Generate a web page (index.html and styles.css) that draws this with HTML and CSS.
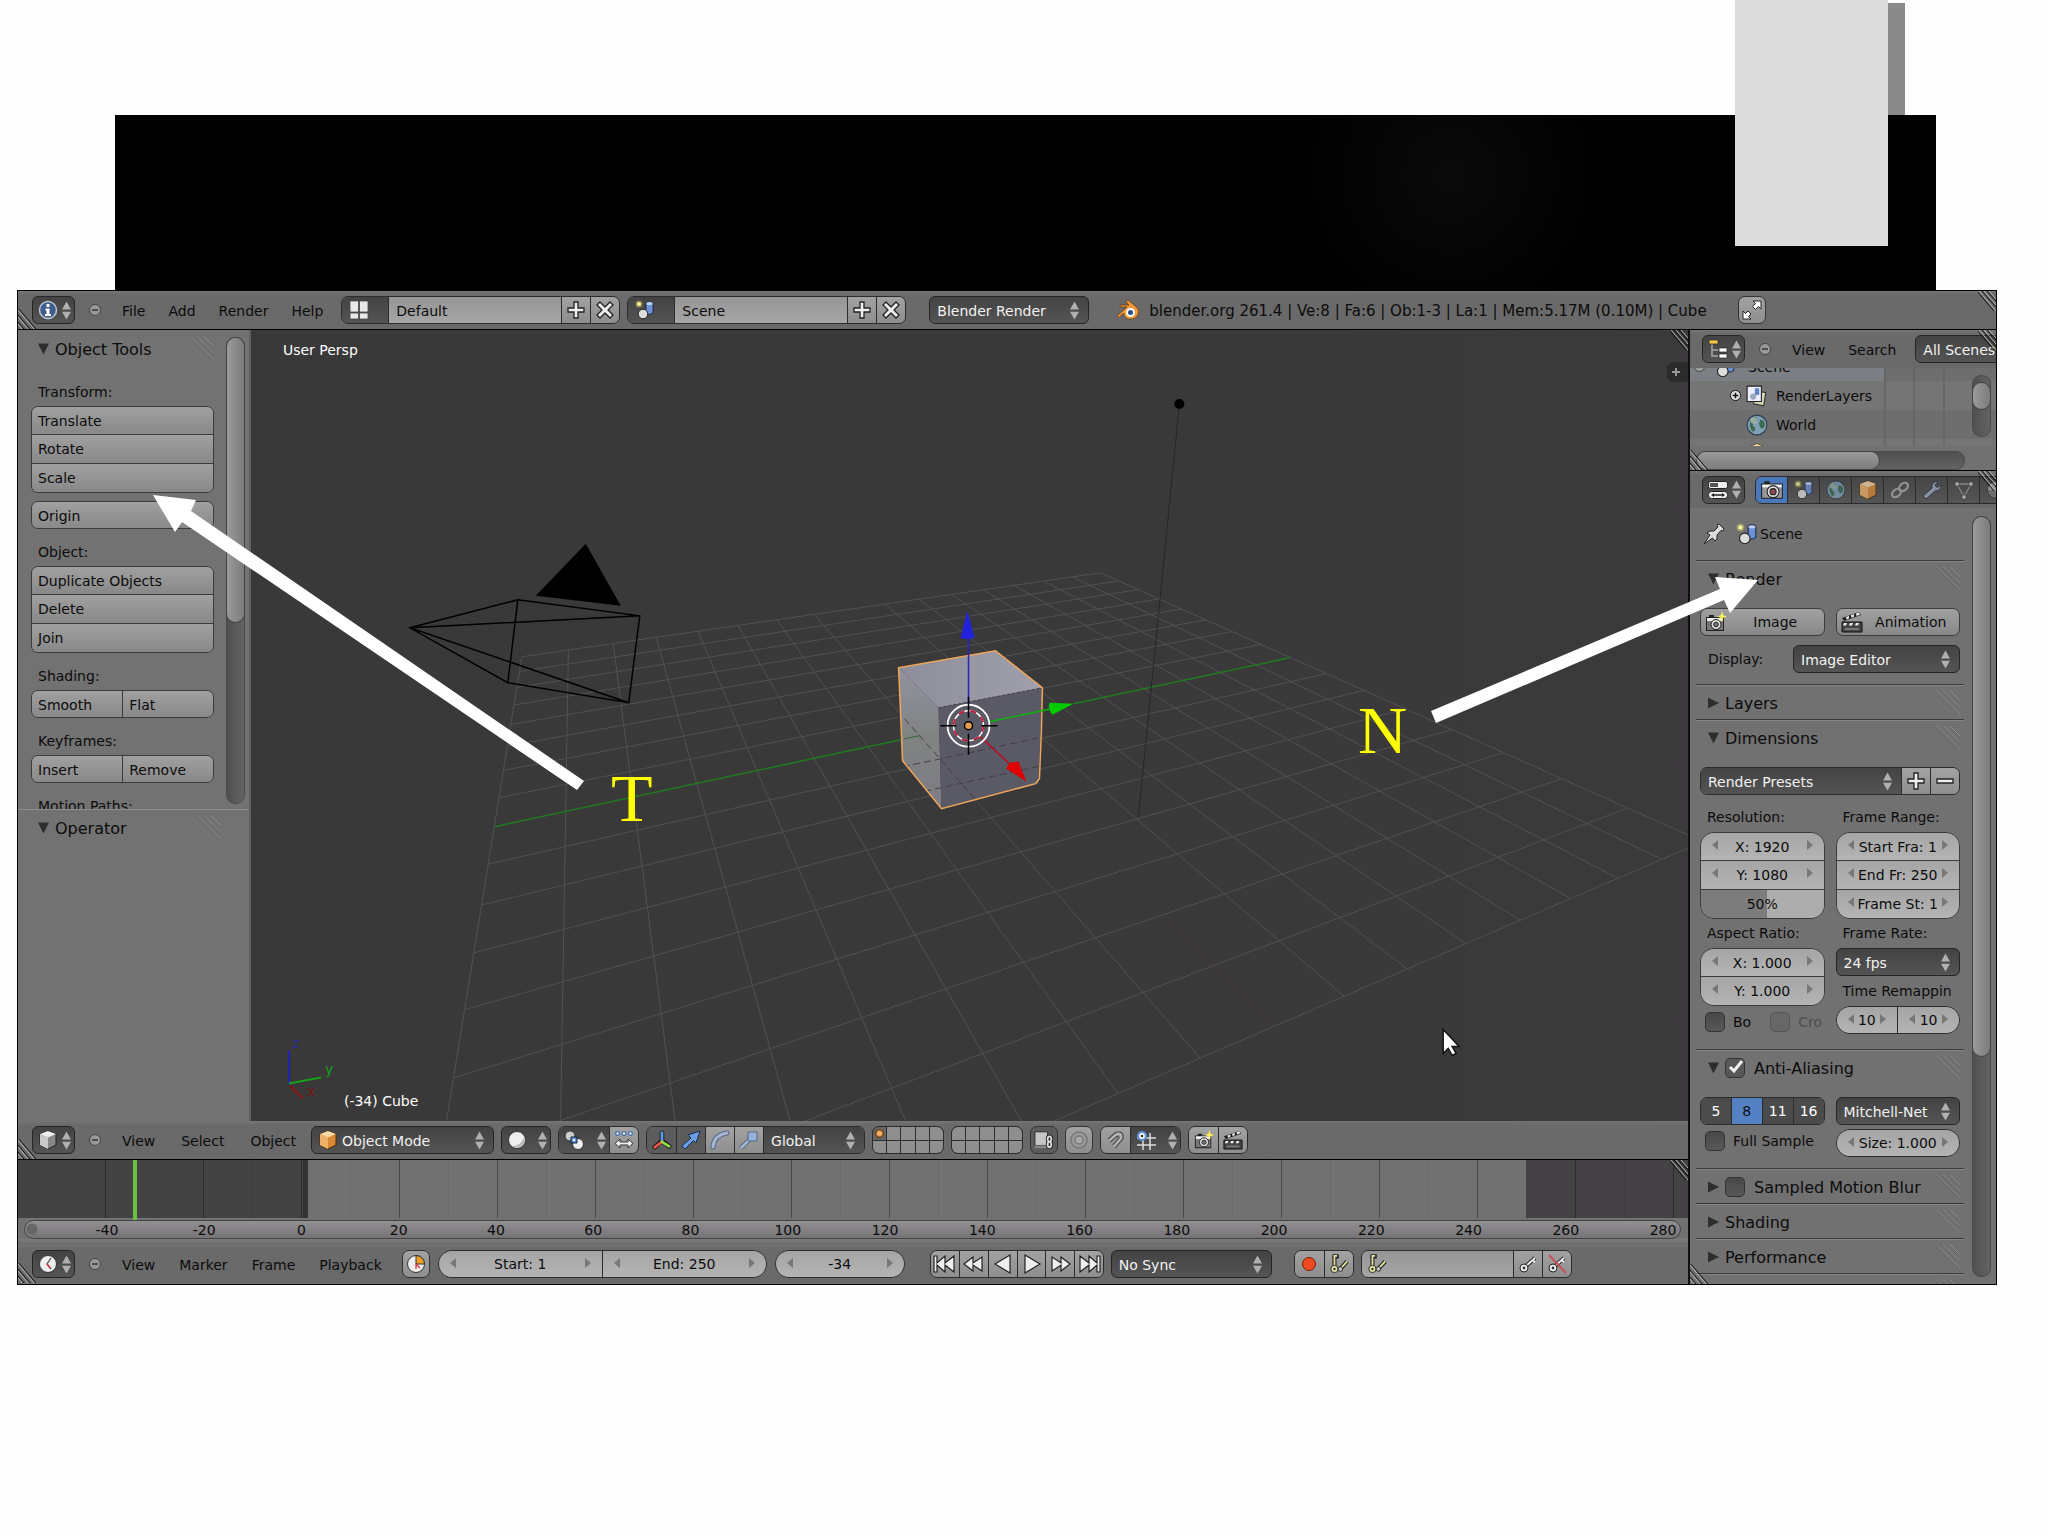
FILE: index.html
```html
<!DOCTYPE html>
<html lang="en">
<head>
    <meta charset="UTF-8">
    <meta name="viewport" content="width=device-width, initial-scale=1.0">
    <title>Blender</title>
    <link rel="stylesheet" href="styles.css">
</head>
<body>

<!-- icon sprite -->
<svg class="sprite" aria-hidden="true">
    <symbol id="updown" viewBox="0 0 10 20"><path d="M0 9L5 0L10 9ZM0 11.500L10 11.500L5 20Z" fill="#b0b0b0"/></symbol>
    <symbol id="minus-dot" viewBox="0 0 14 14"><circle cx="7" cy="7" r="5.500" fill="#999" stroke="#444"/><path d="M4 7H10" stroke="#333" stroke-width="1.500"/></symbol>
    <symbol id="plus" viewBox="0 0 20 20"><path d="M8 2H12V8H18V12H12V18H8V12H2V8H8Z" fill="#eee" stroke="#222" stroke-width="1.300"/></symbol>
    <symbol id="dash" viewBox="0 0 20 20"><path d="M2 8H18V12H2Z" fill="#eee" stroke="#222" stroke-width="1.300"/></symbol>
    <symbol id="cross" viewBox="0 0 20 20"><path d="M5 2L10 7L15 2L18 5L13 10L18 15L15 18L10 13L5 18L2 15L7 10L2 5Z" fill="#eee" stroke="#222" stroke-width="1.300"/></symbol>
    <symbol id="info" viewBox="0 0 20 20"><circle cx="10" cy="10" r="8.500" fill="#3f5d8c" stroke="#b9c4d6" stroke-width="1.500"/><path d="M8.500 4H11.500V7H8.500ZM7.500 8.500H11.500V14H13V16H7V14H8.500V10.500H7.500Z" fill="#fff"/></symbol>
    <symbol id="layout" viewBox="0 0 20 20"><path d="M1 1H9.500V12H1ZM1 13H9.500V19H1ZM10.500 1H19V12H10.500ZM10.500 13H19V19H10.500Z" fill="#e8e8e8" stroke="#444" stroke-width=".8"/></symbol>
    <symbol id="scene" viewBox="0 0 20 20"><path d="M11 3Q14.500 0 18 3V13Q14.500 16 11 13Z" fill="#6a92d4" stroke="#1d2c4a"/><ellipse cx="14.500" cy="3.500" rx="3.200" ry="1.500" fill="#b9d0f2"/><circle cx="8" cy="14" r="4.800" fill="#ddd" stroke="#222"/><circle cx="4" cy="4" r="3.500" fill="#c9c65a" opacity=".5"/><circle cx="4" cy="4" r="2" fill="#f6f3a0"/></symbol>
    <symbol id="blender" viewBox="0 0 24 20"><path d="M1 16L11 7H4V5H13L10 1.500L12 0L21 7.500Q24 11 22 15Q19 19.500 14 19.300Q8 18.500 7.500 13L3 17.500Z" fill="#f09a3c" stroke="#6b3a0c" stroke-width=".8"/><circle cx="14.500" cy="12.500" r="4.500" fill="#fff"/><circle cx="14.500" cy="12.500" r="2.500" fill="#2b4f86"/></symbol>
    <symbol id="expand" viewBox="0 0 20 20"><path d="M11 1H19V9L16.500 6.500L13.500 9.500L10.500 6.500L13.500 3.500ZM1 11L3.500 13.500L6 11L9 14L6.500 16.500L9 19H1Z" fill="#fff" stroke="#222"/></symbol>
    <symbol id="tree" viewBox="0 0 20 20"><path d="M4 5V17H10M4 11H10" fill="none" stroke="#a8a8a8" stroke-width="1.500"/><path d="M1 1H10V5H1Z" fill="#f2c44c" stroke="#222" stroke-width=".7"/><path d="M11 9H19V13H11ZM11 15H19V19H11Z" fill="#fff" stroke="#222" stroke-width=".7"/></symbol>
    <symbol id="props" viewBox="0 0 20 20"><rect x="0.500" y="1.500" width="19" height="7" rx="2" fill="#eee" stroke="#222"/><path d="M2 3H10V7H2Z" fill="#555"/><rect x="0.500" y="11.500" width="19" height="7" rx="3" fill="#eee" stroke="#222"/><path d="M3 15L6 13V17ZM17 15L14 13V17ZM6 14.300H14V15.700H6Z" fill="#222"/></symbol>
    <symbol id="camera" viewBox="0 0 22 20"><path d="M1 4H4V2H9V4H21V18H1Z" fill="#222"/><path d="M2 5H20V8H2Z" fill="#f4f4f4"/><path d="M2 8H20V17H2Z" fill="#999"/><circle cx="12" cy="11.500" r="5.500" fill="#ddd" stroke="#222"/><circle cx="12" cy="11.500" r="2.800" fill="#8a4a58" stroke="#222"/></symbol>
    <symbol id="camera-new" viewBox="0 0 22 22"><path d="M1 6H4V4H9V6H19V20H1Z" fill="#222"/><path d="M2 7H18V10H2Z" fill="#eee"/><path d="M2 10H18V19H2Z" fill="#777"/><circle cx="11" cy="13.500" r="5" fill="#ddd" stroke="#222"/><circle cx="11" cy="13.500" r="2.300" fill="#777" stroke="#222"/><path d="M17 0L18.300 4.200L22 5.500L18.300 6.800L17 11L15.700 6.800L12 5.500L15.700 4.200Z" fill="#f8ee5a"/></symbol>
    <symbol id="clapper" viewBox="0 0 22 22"><path d="M1 11H21V21H1Z" fill="#444" stroke="#111"/><path d="M1 7L18 1L20 4L3 10Z" fill="#222"/><path d="M5 6L8 5L8 7.500L5.500 8.500ZM10 4.200L13 3.200V5.700L10.500 6.700ZM15 2.500L18 1.500L19 3.500L15.500 5ZM3 12H6L5 14.500H2ZM9 12H12L11 14.500H8ZM15 12H18L17 14.500H14Z" fill="#eee"/><path d="M4 17H18V19H4Z" fill="#777"/></symbol>
    <symbol id="globe" viewBox="0 0 20 20"><circle cx="10" cy="10" r="9" fill="#7f9fb5" stroke="#2b3b4b"/><path d="M4 5Q8 1 10 4Q11 7 7 9Q5 10 8 12Q9 16 6 16Q2 12 4 5ZM13 5Q18 6 17 11Q15 15 13 12Q11 9 13 5Z" fill="#3f6a52"/><circle cx="7" cy="6" r="3" fill="#fff" opacity=".45"/></symbol>
    <symbol id="cube-o" viewBox="0 0 20 20"><path d="M10 1L18 4V15L10 19L2 15V4Z" fill="#d98a35" stroke="#4a2b0a"/><path d="M10 1L18 4L10 7.500L2 4Z" fill="#fad9a8"/><path d="M2 4L10 7.500V19L2 15Z" fill="#f0b168"/></symbol>
    <symbol id="cube-w" viewBox="0 0 20 20"><path d="M10 1L18 4V15L10 19L2 15V4Z" fill="#888" stroke="#222"/><path d="M10 1L18 4L10 7.500L2 4Z" fill="#eee"/><path d="M2 4L10 7.500V19L2 15Z" fill="#c9c9c9"/></symbol>
    <symbol id="chain" viewBox="0 0 20 20"><g fill="none" stroke="#aaa" stroke-width="2.200"><ellipse cx="6.500" cy="13" rx="5" ry="3.500" transform="rotate(-40 6.500 13)"/><ellipse cx="13.500" cy="7" rx="5" ry="3.500" transform="rotate(-40 13.500 7)"/></g></symbol>
    <symbol id="wrench" viewBox="0 0 20 20"><path d="M1 16L10 8Q9 3 14 1.500L16 2L13 5L15 7.500L19 5Q19 11 13 11L4 19Z" fill="#9aa8bd" stroke="#2a2f3a"/></symbol>
    <symbol id="mesh" viewBox="0 0 20 20"><path d="M3 4H17L10 17Z" fill="none" stroke="#999" stroke-width="1.300"/><path d="M1 2H5V6H1ZM15 2H19V6H15ZM8 15H12V19H8Z" fill="#ccc" stroke="#333" stroke-width=".7"/></symbol>
    <symbol id="ball" viewBox="0 0 20 20"><circle cx="10" cy="10" r="8.500" fill="#eee" stroke="#333"/><path d="M5 16Q14 16 17 7Q19 14 13 17Q8 18 5 16Z" fill="#bbb"/></symbol>
    <symbol id="material" viewBox="0 0 20 20"><circle cx="10" cy="10" r="8.500" fill="#777" stroke="#333"/><path d="M10 2V10H2Q2 3 10 2ZM10 10H18Q17 18 10 18Z" fill="#aaa"/></symbol>
    <symbol id="pin" viewBox="0 0 22 22"><path d="M1 21L7 12L4 10L7 8L11 8L15 4L14 2L16 1L21 6L20 8L18 7.500L14 12L14 16L12 18L9.500 15Z" fill="#ddd" stroke="#222"/></symbol>
    <symbol id="layers" viewBox="0 0 20 20"><path d="M8 5L18 7L16 19L7 17Z" fill="#d6d6b8" stroke="#333"/><path d="M1 1H14V15H1Z" fill="#eef" stroke="#222"/><path d="M8 3H12V9H8Z" fill="#5b84c8"/><circle cx="6.500" cy="10.500" r="2.800" fill="#9ab"/></symbol>
    <symbol id="pivot" viewBox="0 0 20 20"><circle cx="6" cy="6" r="5" fill="#ccc" stroke="#333"/><circle cx="14" cy="14" r="5.500" fill="#eee" stroke="#333"/><path d="M7 7H13V13H7Z" fill="#5a8fd8" stroke="#123"/><path d="M9 9H11V11H9Z" fill="#fff"/></symbol>
    <symbol id="centers" viewBox="0 0 20 20"><g fill="#fff" stroke="#3d6fae" stroke-width="1.300"><circle cx="3.500" cy="3.500" r="1.800"/><circle cx="10" cy="3.500" r="1.800"/><circle cx="16.500" cy="3.500" r="1.800"/></g><path d="M1 13.500L6 9V12H14V9L19 13.500L14 18V15H6V18Z" fill="#eee" stroke="#333"/></symbol>
    <symbol id="axes" viewBox="0 0 22 22"><g stroke-linecap="round" stroke-width="5" stroke="#1b1b1b"><path d="M11 3V12L3 19M11 12L19 18" fill="none"/></g><g stroke-linecap="round" stroke-width="3"><path d="M11 3V12" stroke="#5c9ae8"/><path d="M11 13L3 19" stroke="#ef5a48"/><path d="M11 13L19 18" stroke="#8be04a"/></g></symbol>
    <symbol id="move" viewBox="0 0 20 20"><path d="M1 16L10 8L7 5L19 1L15 13L12.500 10.500L4 19Z" fill="#6c9fe6" stroke="#152c52"/></symbol>
    <symbol id="arc" viewBox="0 0 20 20"><path d="M3 17Q4 5 17 3" fill="none" stroke="#55657f" stroke-width="5" stroke-linecap="round"/><path d="M3 17Q4 5 17 3" fill="none" stroke="#a3b6d6" stroke-width="3" stroke-linecap="round"/></symbol>
    <symbol id="scale" viewBox="0 0 20 20"><path d="M2 18L11 9" stroke="#55657f" stroke-width="4.500"/><path d="M2 18L11 9" stroke="#a3b6d6" stroke-width="2.500"/><path d="M9 2H18V11H9Z" fill="#93b3dc" stroke="#55657f"/></symbol>
    <symbol id="lock" viewBox="0 0 22 22"><path d="M1 2H15V17H1Z" fill="#c4c4c4" stroke="#222"/><path d="M1 17H15V20H1Z" fill="#888"/><g fill="none" stroke="#222" stroke-width="4"><ellipse cx="17" cy="10" rx="2" ry="3"/><ellipse cx="17" cy="16" rx="2" ry="3"/></g><g fill="none" stroke="#ddd" stroke-width="2"><ellipse cx="17" cy="10" rx="2" ry="3"/><ellipse cx="17" cy="16" rx="2" ry="3"/></g></symbol>
    <symbol id="prop" viewBox="0 0 20 20"><circle cx="10" cy="10" r="8" fill="#999" stroke="#777" stroke-width="1.500"/><circle cx="10" cy="10" r="4" fill="#aaa" stroke="#777" stroke-width="1.500"/></symbol>
    <symbol id="magnet" viewBox="0 0 20 20"><path d="M2 9L9 3Q15 0 17 5Q18 8 15 11L9 18M4.500 12L10 7Q13 5.500 13 8L7 15" fill="none" stroke="#555" stroke-width="1.500"/><path d="M3.300 10.500L9.500 5Q14 2 15.300 6Q15.500 8 14 9.500L8 16.500" fill="none" stroke="#b5b5b5" stroke-width="2"/></symbol>
    <symbol id="snap" viewBox="0 0 20 20"><path d="M1 8H20M1 15H20M7 3V20M14 3V20" stroke="#ddd" stroke-width="1.500"/><circle cx="6" cy="6" r="4" fill="#fff" stroke="#5a8fd8" stroke-width="2.200"/><circle cx="6" cy="6" r="1.300" fill="#333"/></symbol>
    <symbol id="clock" viewBox="0 0 20 20"><circle cx="10" cy="10" r="8.500" fill="#eee" stroke="#333"/><path d="M13 4L9 10L13 15" fill="none" stroke="#555" stroke-width="1.300"/><path d="M9 10L12 14" stroke="#d33" stroke-width="1.300"/></symbol>
    <symbol id="clock-o" viewBox="0 0 20 20"><circle cx="10" cy="10" r="8.500" fill="#eee" stroke="#333"/><path d="M10 1.500A8.500 8.500 0 0 1 18.500 10H10Z" fill="#f0a020" stroke="#333"/><path d="M10 10V15M10 10L14 14" stroke="#d33" stroke-width="1.200"/></symbol>
    <symbol id="first" viewBox="0 0 24 20"><path d="M1 2H4V9L12 2V9L21 2V18L12 11V18L4 11V18H1Z" fill="#eee" stroke="#222" stroke-width="1.200"/></symbol>
    <symbol id="rew" viewBox="0 0 24 20"><path d="M2 10L11 3V9L20 3V17L11 11V17Z" fill="#eee" stroke="#222" stroke-width="1.200"/></symbol>
    <symbol id="back" viewBox="0 0 24 20"><path d="M4 10L19 1V19Z" fill="#eee" stroke="#222" stroke-width="1.200"/></symbol>
    <symbol id="key" viewBox="0 0 20 20"><g stroke="#222" stroke-width="4" fill="none"><path d="M8 12L17 4"/></g><path d="M8 12L17 4M14 6L17 8" stroke="#eee" stroke-width="2"/><circle cx="6" cy="14" r="4" fill="#eee" stroke="#222"/><circle cx="6" cy="14" r="1.400" fill="#333"/></symbol>
    <symbol id="keys" viewBox="0 0 22 22"><path d="M6 14V2M12 17L20 8" stroke="#222" stroke-width="4.500"/><path d="M4 2H9V5" fill="none" stroke="#222" stroke-width="3.500"/><path d="M6 14V2H9M12 17L20 8" fill="none" stroke="#e3e3a0" stroke-width="2"/><circle cx="6" cy="16.500" r="4" fill="#e3e3a0" stroke="#222"/><circle cx="6" cy="16.500" r="1.300" fill="#333"/><circle cx="12.500" cy="16.500" r="2.500" fill="#ccc" stroke="#222"/></symbol>
    <symbol id="hatch" viewBox="0 0 26 26"><path d="M1 1L26 26M8 1L26 19M15 1L26 12" stroke="#969696" fill="none"/><path d="M0 1L25 26M7 1L26 20M14 1L26 13" stroke="#555" fill="none" opacity=".6"/></symbol>
    <symbol id="grip" viewBox="0 0 18 20"><path d="M1 0L18 20M6 0L18 14M11 0L18 8" stroke="#b4b4b4"/><path d="M-1 0L16 20M4 0L18 16M9 0L18 10" stroke="#111"/></symbol>
    <symbol id="grip-low" viewBox="0 0 18 20"><path d="M0 1L16 20M0 8L10 20M0 15L4 20" stroke="#b4b4b4"/><path d="M0 -1L18 20M0 6L12 20M0 13L6 20" stroke="#111"/></symbol>
    <symbol id="down" viewBox="0 0 12 12"><path d="M0 0H12L6 12Z" fill="#2e2e2e"/></symbol>
    <symbol id="right" viewBox="0 0 12 12"><path d="M0 0V12L12 6Z" fill="#2e2e2e"/></symbol>
</svg>

<main class="slide">
    <div class="tab-shadow"></div>
    <div class="banner"></div>
    <div class="tab"></div>

    <section class="window">
        <header class="bar top-bar">
            <svg class="grip bottom-left"><use href="#grip-low"/></svg>
            <svg class="grip top-right"><use href="#grip"/></svg>
            <button class="dark picker" aria-label="Editor type"><svg class="icon"><use href="#info"/></svg><svg class="updown"><use href="#updown"/></svg></button>
            <svg class="collapse"><use href="#minus-dot"/></svg>
            <nav class="menus">
                <button>File</button><button>Add</button><button>Render</button><button>Help</button>
            </nav>
            <div class="row datablock">
                <button class="dark browse" aria-label="Browse screens"><svg class="icon"><use href="#layout"/></svg></button>
                <input type="text" value="Default" aria-label="Screen">
                <button class="tool" aria-label="Add screen"><svg class="icon"><use href="#plus"/></svg></button>
                <button class="tool" aria-label="Delete screen"><svg class="icon"><use href="#cross"/></svg></button>
            </div>
            <div class="row datablock">
                <button class="dark browse" aria-label="Browse scenes"><svg class="icon"><use href="#scene"/></svg></button>
                <input type="text" value="Scene" aria-label="Scene">
                <button class="tool" aria-label="Add scene"><svg class="icon"><use href="#plus"/></svg></button>
                <button class="tool" aria-label="Delete scene"><svg class="icon"><use href="#cross"/></svg></button>
            </div>
            <select class="dark engine" aria-label="Render engine"><option>Blender Render</option></select>
            <svg class="logo"><use href="#blender"/></svg>
            <span class="stats">blender.org 261.4 | Ve:8 | Fa:6 | Ob:1-3 | La:1 | Mem:5.17M (0.10M) | Cube</span>
            <button class="tool single" aria-label="Full screen"><svg class="icon"><use href="#expand"/></svg></button>
        </header>

        <div class="columns">
            <div class="left">
                <div class="view-row">
                    <aside class="shelf">
                        <div class="shelf-tools">
                            <div class="shelf-list">
                                <h2 class="title"><svg class="tri"><use href="#down"/></svg>Object Tools<svg class="hatch"><use href="#hatch"/></svg></h2>
                                <h3 class="first">Transform:</h3>
                                <div class="stack"><button>Translate</button><button>Rotate</button><button>Scale</button></div>
                                <div class="stack apart"><button>Origin</button></div>
                                <h3>Object:</h3>
                                <div class="stack"><button>Duplicate Objects</button><button>Delete</button><button>Join</button></div>
                                <h3>Shading:</h3>
                                <div class="stack pair"><button>Smooth</button><button>Flat</button></div>
                                <h3>Keyframes:</h3>
                                <div class="stack pair"><button>Insert</button><button>Remove</button></div>
                                <h3>Motion Paths:</h3>
                            </div>
                            <div class="scroll"><div class="thumb"></div></div>
                        </div>
                        <div class="shelf-operator">
                            <h2 class="title"><svg class="tri"><use href="#down"/></svg>Operator<svg class="hatch"><use href="#hatch"/></svg></h2>
                        </div>
                    </aside>

                    <div class="viewport">
                        <svg class="grip top-right"><use href="#grip"/></svg>
                        <svg class="scene" viewBox="251 330 1438 792">
                            <g id="grid" stroke="#515151" fill="none"></g>
                            <path d="M495 827L920 736M1074 704L1290 658" stroke="#217a21" stroke-width="1.500"/>
                            <path d="M1180 404L1139 818" stroke="#272727"/>
                            <circle cx="1180" cy="404" r="5"/>
                            <path d="M586 544L536 596L621 606Z"/>
                            <path d="M410 628L518 600L640 616L629 703L508 683ZM410 628L640 616M410 628L629 703M518 600L508 683" fill="none" stroke="#000" stroke-width="1.500"/>
                            <defs>
                                <linearGradient id="side" x1="0" y1="0" x2="0" y2="1"><stop offset="0" stop-color="#9393a0"/><stop offset=".5" stop-color="#808282"/><stop offset="1" stop-color="#7d7d86"/></linearGradient>
                                <linearGradient id="lid" x1="0" y1="0" x2="1" y2="0"><stop offset="0" stop-color="#8d8d9b"/><stop offset="1" stop-color="#a0a0ac"/></linearGradient>
                            </defs>
                            <path d="M899 668L996 651L1043 688L939 708Z" fill="url(#lid)"/>
                            <path d="M899 668L939 708L942 809L903 761Z" fill="url(#side)"/>
                            <path d="M939 708L1043 688L1039 784L942 809Z" fill="#5a5966"/>
                            <path d="M939 708L1043 688" stroke="#444" stroke-dasharray="3 2"/>
                            <path d="M920 736L905 739" stroke="#2b6b2b"/>
                            <path d="M905 719L942 761L980 805M903 767L942 759L1040 738M914 794L942 788L1042 766" fill="none" stroke="#3f3f42" stroke-dasharray="7 4"/>
                            <path d="M899 668L996 651L1043 688L1042 730L1040 779L1036 784L942 809L903 761L901 713Z" fill="none" stroke="#eda659" stroke-width="1.500"/>
                            <path d="M969 706V636" stroke="#2a23b8" stroke-width="1.500"/>
                            <path d="M968 611L975 638Q968 641 961 638Z" fill="#2222dd"/>
                            <path d="M990 722L1052 709" stroke="#0bb40b" stroke-width="1.500"/>
                            <path d="M1074 704L1053 715Q1048 709 1050 703Z" fill="#00cc00"/>
                            <path d="M981 737L1012 766" stroke="#c00a1c" stroke-width="1.500"/>
                            <path d="M1027 782L1007 769Q1008 762 1019 762Z" fill="#de0000"/>
                            <circle cx="969" cy="726" r="21" fill="none" stroke="#fff" stroke-width="1.800"/>
                            <circle cx="969" cy="726" r="15" fill="none" stroke="#fff" stroke-width="1.500"/>
                            <circle cx="969" cy="726" r="15" fill="none" stroke="#c8102e" stroke-width="1.700" stroke-dasharray="6 6"/>
                            <path d="M941 726H957M982 726H998M969 697V718M969 734V755" stroke="#000" stroke-width="1.500"/>
                            <circle cx="969" cy="726" r="4" fill="#e8a050" stroke="#000" stroke-width="1.500"/>
                            <path d="M289 1085V1051" stroke="#2222b4" stroke-width="2"/>
                            <path d="M289 1084L321 1078" stroke="#18a018" stroke-width="2"/>
                            <path d="M290 1086L303 1099" stroke="#861414" stroke-width="2"/>
                            <text x="292" y="1049" class="axis" fill="#2a2a90">z</text>
                            <text x="325" y="1075" class="axis" fill="#18a018">y</text>
                            <text x="307" y="1097" class="axis" fill="#7c1616">x</text>
                            <text x="283" y="355" class="caption">User Persp</text>
                            <text x="344" y="1107" class="caption">(-34) Cube</text>
                            <rect x="1668" y="362" width="26" height="20" rx="6" fill="#2b2b2b"/>
                            <path d="M1673 372H1681M1677 368V376" stroke="#999" stroke-width="2"/>
                            <path d="M1444 1030V1054L1449 1049L1453 1056L1457 1054L1453 1047H1460Z" fill="#fff" stroke="#111" stroke-width="1.500"/>
                        </svg>
                    </div>
                </div>

                <div class="bar view-bar">
                    <svg class="grip bottom-left"><use href="#grip-low"/></svg>
                    <button class="dark picker" aria-label="Editor type"><svg class="icon"><use href="#cube-w"/></svg><svg class="updown"><use href="#updown"/></svg></button>
                    <svg class="collapse"><use href="#minus-dot"/></svg>
                    <nav class="menus"><button>View</button><button>Select</button><button>Object</button></nav>
                    <label class="mode"><svg class="icon"><use href="#cube-o"/></svg><select class="dark" aria-label="Mode"><option>Object Mode</option></select></label>
                    <button class="dark picker shade" aria-label="Shading"><svg class="icon"><use href="#ball"/></svg><svg class="updown"><use href="#updown"/></svg></button>
                    <div class="row">
                        <button class="dark picker shade" aria-label="Pivot"><svg class="icon"><use href="#pivot"/></svg><svg class="updown"><use href="#updown"/></svg></button>
                        <button class="tool" aria-label="Manipulate centers"><svg class="icon"><use href="#centers"/></svg></button>
                    </div>
                    <div class="row">
                        <button class="tool on" aria-label="Manipulator"><svg class="icon"><use href="#axes"/></svg></button>
                        <button class="tool on" aria-label="Translate"><svg class="icon"><use href="#move"/></svg></button>
                        <button class="tool" aria-label="Rotate"><svg class="icon"><use href="#arc"/></svg></button>
                        <button class="tool" aria-label="Scale"><svg class="icon"><use href="#scale"/></svg></button>
                        <select class="dark orient" aria-label="Orientation"><option>Global</option></select>
                    </div>
                    <div class="layers">
                        <button class="on" aria-label="Layer 1"></button><button aria-label="Layer 2"></button><button aria-label="Layer 3"></button><button aria-label="Layer 4"></button><button aria-label="Layer 5"></button>
                        <button aria-label="Layer 11"></button><button aria-label="Layer 12"></button><button aria-label="Layer 13"></button><button aria-label="Layer 14"></button><button aria-label="Layer 15"></button>
                    </div>
                    <div class="layers">
                        <button aria-label="Layer 6"></button><button aria-label="Layer 7"></button><button aria-label="Layer 8"></button><button aria-label="Layer 9"></button><button aria-label="Layer 10"></button>
                        <button aria-label="Layer 16"></button><button aria-label="Layer 17"></button><button aria-label="Layer 18"></button><button aria-label="Layer 19"></button><button aria-label="Layer 20"></button>
                    </div>
                    <button class="tool single on" aria-label="Lock"><svg class="icon"><use href="#lock"/></svg></button>
                    <button class="tool single" aria-label="Proportional"><svg class="icon"><use href="#prop"/></svg></button>
                    <div class="row">
                        <button class="tool" aria-label="Snap"><svg class="icon"><use href="#magnet"/></svg></button>
                        <button class="dark picker shade" aria-label="Snap element"><svg class="icon"><use href="#snap"/></svg><svg class="updown"><use href="#updown"/></svg></button>
                    </div>
                    <div class="row">
                        <button class="tool" aria-label="Render image"><svg class="icon"><use href="#camera-new"/></svg></button>
                        <button class="tool" aria-label="Render animation"><svg class="icon"><use href="#clapper"/></svg></button>
                    </div>
                </div>

                <div class="timeline">
                    <svg class="grip top-right"><use href="#grip"/></svg>
                    <div class="before"></div>
                    <div class="range"></div>
                    <div class="after"></div>
                    <div class="ticks" id="ticks"></div>
                    <div class="playhead"></div>
                </div>
                <div class="ruler">
                    <div class="numbers">
                        <span>-40</span><span>-20</span><span>0</span><span>20</span><span>40</span><span>60</span><span>80</span><span>100</span><span>120</span><span>140</span><span>160</span><span>180</span><span>200</span><span>220</span><span>240</span><span>260</span><span>280</span>
                    </div>
                </div>

                <div class="bar time-bar">
                    <svg class="grip bottom-left"><use href="#grip-low"/></svg>
                    <button class="dark picker" aria-label="Editor type"><svg class="icon"><use href="#clock"/></svg><svg class="updown"><use href="#updown"/></svg></button>
                    <svg class="collapse"><use href="#minus-dot"/></svg>
                    <nav class="menus"><button>View</button><button>Marker</button><button>Frame</button><button>Playback</button></nav>
                    <button class="tool single" aria-label="Use preview range"><svg class="icon"><use href="#clock-o"/></svg></button>
                    <div class="row round frames"><input class="num" type="text" value="Start: 1" aria-label="Start frame"><input class="num" type="text" value="End: 250" aria-label="End frame"></div>
                    <div class="row round current"><input class="num" type="text" value="-34" aria-label="Current frame"></div>
                    <div class="row player">
                        <button class="tool" aria-label="First"><svg class="icon"><use href="#first"/></svg></button>
                        <button class="tool" aria-label="Previous key"><svg class="icon"><use href="#rew"/></svg></button>
                        <button class="tool" aria-label="Play reverse"><svg class="icon"><use href="#back"/></svg></button>
                        <button class="tool" aria-label="Play"><svg class="icon flip"><use href="#back"/></svg></button>
                        <button class="tool" aria-label="Next key"><svg class="icon flip"><use href="#rew"/></svg></button>
                        <button class="tool" aria-label="Last"><svg class="icon flip"><use href="#first"/></svg></button>
                    </div>
                    <select class="dark sync" aria-label="Sync"><option>No Sync</option></select>
                    <div class="row record">
                        <button class="tool" aria-label="Record"><i class="rec"></i></button>
                        <button class="tool" aria-label="Keying options"><svg class="icon"><use href="#keys"/></svg></button>
                    </div>
                    <div class="row keying">
                        <svg class="icon"><use href="#keys"/></svg>
                        <input type="text" value="" aria-label="Keying set">
                        <button class="tool" aria-label="Insert key"><svg class="icon"><use href="#key"/></svg></button>
                        <button class="tool" aria-label="Delete key"><svg class="icon" viewBox="0 0 20 20"><use href="#key"/><path d="M2 1L19 19" stroke="#c8505c" stroke-width="2"/></svg></button>
                    </div>
                </div>
            </div>

            <div class="right">
                <svg class="grip top-right"><use href="#grip"/></svg>
                <svg class="grip bottom-left"><use href="#grip-low"/></svg>
                <div class="bar">
                    <button class="dark picker" aria-label="Editor type"><svg class="icon"><use href="#tree"/></svg><svg class="updown"><use href="#updown"/></svg></button>
                    <svg class="collapse"><use href="#minus-dot"/></svg>
                    <nav class="menus"><button>View</button><button>Search</button></nav>
                    <select class="dark filter" aria-label="Display mode"><option>All Scenes</option></select>
                </div>
                <div class="outliner">
                    <ul>
                        <li class="root"><svg class="dot"><use href="#minus-dot"/></svg><svg class="icon"><use href="#scene"/></svg>Scene</li>
                        <li><svg class="dot" viewBox="0 0 14 14"><circle cx="7" cy="7" r="5.500" fill="#ddd" stroke="#111"/><path d="M4 7H10M7 4V10" stroke="#111" stroke-width="1.500"/></svg><svg class="icon"><use href="#layers"/></svg>RenderLayers</li>
                        <li class="world"><svg class="icon"><use href="#globe"/></svg>World</li>
                        <li class="world"><svg class="icon"><use href="#cube-o"/></svg></li>
                    </ul>
                    <div class="scroll"><div class="thumb"></div></div>
                </div>
                <div class="hscroll"><div class="thumb"></div></div>

                <div class="bar props-bar">
                    <svg class="grip top-right"><use href="#grip"/></svg>
                    <svg class="grip above-left"><use href="#grip-low"/></svg>
                    <button class="dark picker" aria-label="Editor type"><svg class="icon"><use href="#props"/></svg><svg class="updown"><use href="#updown"/></svg></button>
                    <div class="row tabs">
                        <button class="active" aria-label="Render"><svg class="icon"><use href="#camera"/></svg></button>
                        <button aria-label="Scene"><svg class="icon"><use href="#scene"/></svg></button>
                        <button aria-label="World"><svg class="icon"><use href="#globe"/></svg></button>
                        <button aria-label="Object"><svg class="icon"><use href="#cube-o"/></svg></button>
                        <button aria-label="Constraints"><svg class="icon"><use href="#chain"/></svg></button>
                        <button aria-label="Modifiers"><svg class="icon"><use href="#wrench"/></svg></button>
                        <button aria-label="Data"><svg class="icon"><use href="#mesh"/></svg></button>
                        <button aria-label="Material"><svg class="icon"><use href="#material"/></svg></button>
                    </div>
                </div>
                <div class="properties">
                    <div class="panels">
                        <div class="context"><svg class="icon"><use href="#pin"/></svg><svg class="icon"><use href="#scene"/></svg>Scene</div>

                        <section class="panel">
                            <h2 class="title"><svg class="tri"><use href="#down"/></svg>Render<svg class="hatch"><use href="#hatch"/></svg></h2>
                            <div class="cols">
                                <button class="action"><svg class="icon"><use href="#camera-new"/></svg><span>Image</span></button>
                                <button class="action"><svg class="icon"><use href="#clapper"/></svg><span>Animation</span></button>
                            </div>
                            <div class="display"><label for="display">Display:</label><select class="dark" id="display"><option>Image Editor</option></select></div>
                        </section>

                        <section class="panel shut"><h2 class="title"><svg class="tri"><use href="#right"/></svg>Layers<svg class="hatch"><use href="#hatch"/></svg></h2></section>

                        <section class="panel">
                            <h2 class="title"><svg class="tri"><use href="#down"/></svg>Dimensions<svg class="hatch"><use href="#hatch"/></svg></h2>
                            <div class="row presets">
                                <select class="dark" aria-label="Render presets"><option>Render Presets</option></select>
                                <button class="tool" aria-label="Add preset"><svg class="icon"><use href="#plus"/></svg></button>
                                <button class="tool" aria-label="Remove preset"><svg class="icon"><use href="#dash"/></svg></button>
                            </div>
                            <div class="cols">
                                <div>
                                    <h3>Resolution:</h3>
                                    <div class="nums">
                                        <input class="num" type="text" value="X: 1920" aria-label="Resolution X">
                                        <input class="num" type="text" value="Y: 1080" aria-label="Resolution Y">
                                        <input class="percent" type="text" value="50%" aria-label="Resolution percentage">
                                    </div>
                                    <h3>Aspect Ratio:</h3>
                                    <div class="nums">
                                        <input class="num" type="text" value="X: 1.000" aria-label="Aspect X">
                                        <input class="num" type="text" value="Y: 1.000" aria-label="Aspect Y">
                                    </div>
                                    <div class="checks">
                                        <label><input type="checkbox">Bo</label>
                                        <label class="off"><input type="checkbox" disabled>Cro</label>
                                    </div>
                                </div>
                                <div>
                                    <h3>Frame Range:</h3>
                                    <div class="nums">
                                        <input class="num" type="text" value="Start Fra: 1" aria-label="Frame start">
                                        <input class="num" type="text" value="End Fr: 250" aria-label="Frame end">
                                        <input class="num" type="text" value="Frame St: 1" aria-label="Frame step">
                                    </div>
                                    <h3>Frame Rate:</h3>
                                    <select class="dark" aria-label="Frame rate"><option>24 fps</option></select>
                                    <h3>Time Remappin</h3>
                                    <div class="row round"><input class="num" type="text" value="10" aria-label="Old"><input class="num" type="text" value="10" aria-label="New"></div>
                                </div>
                            </div>
                        </section>

                        <section class="panel">
                            <h2 class="title"><svg class="tri"><use href="#down"/></svg><label><input type="checkbox" checked>Anti-Aliasing</label><svg class="hatch"><use href="#hatch"/></svg></h2>
                            <div class="cols">
                                <div>
                                    <div class="row samples"><button>5</button><button class="active">8</button><button>11</button><button>16</button></div>
                                    <div class="checks"><label><input type="checkbox">Full Sample</label></div>
                                </div>
                                <div>
                                    <select class="dark" aria-label="Filter"><option>Mitchell-Net</option></select>
                                    <div class="row round size"><input class="num" type="text" value="Size: 1.000" aria-label="Filter size"></div>
                                </div>
                            </div>
                        </section>

                        <section class="panel shut"><h2 class="title"><svg class="tri"><use href="#right"/></svg><label><input type="checkbox">Sampled Motion Blur</label><svg class="hatch"><use href="#hatch"/></svg></h2></section>
                        <section class="panel shut"><h2 class="title"><svg class="tri"><use href="#right"/></svg>Shading<svg class="hatch"><use href="#hatch"/></svg></h2></section>
                        <section class="panel shut"><h2 class="title"><svg class="tri"><use href="#right"/></svg>Performance<svg class="hatch"><use href="#hatch"/></svg></h2></section>
                        <section class="panel rest"><h2 class="title"><svg class="hatch"><use href="#hatch"/></svg></h2></section>
                    </div>
                    <div class="scroll"><div class="thumb"></div></div>
                </div>
            </div>
        </div>
    </section>

    <!-- callouts over the window -->
    <svg class="notes" viewBox="0 0 2048 1536">
        <path d="M153 495L196 500L191 511L584 781L577 790L182 522L175 532Z" fill="#fff"/>
        <path d="M1758 580L1715 577L1720 589L1431 711L1436 723L1724 600L1730 613Z" fill="#fff"/>
        <text x="611" y="821">T</text>
        <text x="1358" y="753">N</text>
    </svg>
</main>

<script src="script.js"></script>
</body>
</html>
```

FILE: styles.css
```css
* {
    box-sizing: border-box;
    margin: 0;
    padding: 0;
}
body {
    font-family: "DejaVu Sans", sans-serif;
    font-size: 14px;
    color: #0c0c0c;
    background: #fefefe;
}
button, input, select {
    font: inherit;
    color: inherit;
    border: none;
    background: none;
    appearance: none;
    border-radius: 0;
    min-width: 0;
}
h2, h3 {
    font-weight: normal;
}
h3 {
    font-size: 14px;
    line-height: 28px;
    white-space: nowrap;
}
svg {
    flex-shrink: 0;
}
.sprite {
    position: absolute;
    width: 0;
    height: 0;
}

/* slide */
.slide {
    position: relative;
    min-height: 100vh;
    padding-top: 115px;
    overflow: hidden;
}
.banner {
    position: relative;
    height: 175px;
    margin: 0 112px 0 115px;
    background: radial-gradient(circle at 1335px 60px, #0a0a0a, #000 160px);
}
.tab, .tab-shadow {
    position: absolute;
    top: 0;
    right: 160px;
    width: 153px;
    height: 246px;
    background: #dcdcdc;
}
.tab-shadow {
    top: 3px;
    right: 143px;
    height: 120px;
    background: #8a8a8a;
}
.notes {
    position: absolute;
    top: 0;
    left: 0;
    width: 100%;
    pointer-events: none;
}
.notes text {
    font-family: "Liberation Serif", serif;
    font-size: 68px;
    fill: #ffff00;
}

/* window frame */
.window {
    position: relative;
    margin: 0 51px 0 17px;
    border: 1px solid #000;
    background: #6e6e6e;
}
.columns {
    display: grid;
    grid-template-columns: minmax(0, 1fr) 308px;
    border-top: 1px solid #000;
}
.left {
    display: flex;
    flex-direction: column;
    min-width: 0;
}
.right {
    position: relative;
    border-left: 2px solid #111;
    background: #727172;
    overflow: hidden;
}
.grip {
    position: absolute;
    width: 18px;
    height: 20px;
    z-index: 2;
}
.top-right {
    top: 0;
    right: 0;
}
.bottom-left {
    bottom: 0;
    left: 0;
}
.above-left {
    bottom: 38px;
    left: 0;
}

/* header bars */
.bar {
    position: relative;
    display: flex;
    align-items: center;
    gap: 7px;
    height: 38px;
    padding-left: 14px;
    background: linear-gradient(#757575, #6a6a6a 4px, #696969);
    white-space: nowrap;
}
.bar > * {
    flex-shrink: 0;
}
.collapse {
    width: 14px;
    height: 14px;
    margin: 0 13px 0 6px;
}
.menus {
    display: flex;
    gap: 23px;
    margin-right: 11px;
}
.menus button, .stats {
    padding-top: 2px;
}
.view-bar .menus {
    gap: 26px;
    margin-right: 8px;
}
.time-bar .menus {
    gap: 24px;
    margin-right: 13px;
}
.icon {
    width: 20px;
    height: 20px;
}
.updown {
    width: 9px;
    height: 19px;
}
.flip {
    transform: scaleX(-1);
}
.dark {
    height: 28px;
    border: 1px solid #252525;
    border-radius: 6px;
    background: linear-gradient(#434343, #545454);
    color: #f2f2f2;
}
select.dark {
    padding: 1px 26px 0 7px;
    background: url("data:image/svg+xml,%3Csvg xmlns='http://www.w3.org/2000/svg' width='9' height='19' viewBox='0 0 10 20'%3E%3Cpath d='M0 9L5 0L10 9ZM0 11.500H10L5 20Z' fill='%23b0b0b0'/%3E%3C/svg%3E") no-repeat right 9px top 4px, linear-gradient(#434343, #545454);
}
.picker {
    display: flex;
    align-items: center;
    justify-content: space-between;
    width: 43px;
    padding: 0 3px 0 5px;
}
.shade {
    width: 50px;
}
.tool {
    display: flex;
    align-items: center;
    justify-content: center;
    width: 29px;
    height: 28px;
    background: linear-gradient(#a2a2a2, #8e8e8e);
}
.tool.on {
    background: #5c5c5c;
}
.single {
    width: 28px;
    border: 1px solid #333;
    border-radius: 7px;
}
.row {
    display: flex;
    height: 28px;
    border: 1px solid #2c2c2c;
    border-radius: 7px;
    overflow: hidden;
}
.row > * {
    height: 26px;
    border: none;
    border-radius: 0;
}
.row > * + * {
    border-left: 1px solid #2c2c2c;
}
.datablock .browse {
    width: 46px;
    padding-left: 7px;
    text-align: left;
}
.datablock .browse .icon {
    display: block;
}
.datablock input {
    width: 173px;
    padding: 2px 0 0 7px;
    background: linear-gradient(#959595, #a6a6a6);
}
.engine {
    width: 160px;
    margin-left: 16px;
}
.logo {
    width: 24px;
    height: 20px;
    margin: 0 2px 0 20px;
}
.stats {
    font-size: 15px;
}
.stats + .single {
    margin-left: 24px;
}
.mode {
    position: relative;
}
.mode .icon {
    position: absolute;
    left: 7px;
    top: 4px;
}
.mode select {
    width: 183px;
    padding-left: 30px;
}
.orient {
    width: 101px;
}
.layers {
    display: grid;
    grid-template-columns: repeat(5, 1fr);
    gap: 1px;
    width: 72px;
    height: 28px;
    border: 1px solid #2c2c2c;
    border-radius: 7px;
    background: #2c2c2c;
    overflow: hidden;
}
.layers button {
    background: #8f8f8f;
}
.layers .on {
    background: radial-gradient(circle, #f5b06a 2px, #6b3a10 4px, #666 5px);
}

/* tool shelf */
.view-row {
    display: grid;
    grid-template-columns: 233px minmax(0, 1fr);
}
.shelf {
    display: flex;
    flex-direction: column;
    min-height: 0;
    border-right: 2px solid #606060;
    background: #727272;
}
.shelf-tools {
    display: flex;
    height: 480px;
    padding: 4px 4px 0 13px;
    border-bottom: 1px solid #8c8c8c;
    overflow: hidden;
}
.shelf-list {
    flex: 1;
    margin-right: 12px;
}
.shelf-operator {
    padding: 3px 28px 0 13px;
}
.title {
    position: relative;
    display: flex;
    align-items: center;
    height: 30px;
    padding-left: 7px;
    font-size: 16px;
    white-space: nowrap;
}
.tri {
    width: 11px;
    height: 12px;
    margin-right: 6px;
}
.hatch {
    position: absolute;
    top: 1px;
    right: 0;
    width: 25px;
    height: 26px;
}
.shelf h3 {
    margin-top: 9px;
    padding-left: 7px;
}
.shelf h3.first {
    margin-top: 14px;
}
.stack {
    border: 1px solid #3c3c3c;
    border-radius: 7px;
    overflow: hidden;
}
.stack button {
    display: block;
    width: 100%;
    height: 27px;
    padding-left: 6px;
    text-align: left;
    background: linear-gradient(#a0a0a0, #888);
}
.stack button + button {
    height: 29px;
    border-top: 1px solid #3c3c3c;
}
.apart, .pair {
    height: 28px;
}
.apart {
    margin-top: 8px;
}
.pair {
    display: flex;
}
.stack.pair button + button {
    height: 27px;
    border-top: none;
    border-left: 1px solid #3c3c3c;
}
.scroll {
    width: 19px;
    margin: 3px 0 5px;
    border: 1px solid #4a4a4a;
    border-radius: 9px;
    background: linear-gradient(90deg, #505050, #636363);
}
.scroll .thumb {
    height: 61%;
    border-radius: 9px;
    background: linear-gradient(90deg, #9a9a9a, #7c7c7c);
    box-shadow: 0 0 0 1px #444;
}

/* 3D viewport */
.viewport {
    position: relative;
    background: linear-gradient(90deg, #393939, #3b393b);
}
.scene {
    display: block;
    width: 100%;
}
.caption {
    fill: #fff;
    font-size: 14px;
}
.axis {
    font-size: 14px;
}

/* timeline */
.timeline {
    position: relative;
    display: flex;
    height: 59px;
    border-top: 1px solid #000;
}
.before {
    width: 290px;
    background: #434343;
    border-right: 5px solid #333;
}
.range {
    flex: 1;
    background: #727172;
}
.after {
    width: 162px;
    background: #444244;
}
.ticks {
    position: absolute;
    inset: 0 14px 0 87px;
    display: flex;
    justify-content: space-between;
}
.ticks i {
    width: 1px;
    background: #000;
    opacity: 0.35;
}
.ticks i:nth-child(even) {
    opacity: 0.06;
}
.playhead {
    position: absolute;
    top: 0;
    left: 115px;
    width: 4px;
    height: 60px;
    background: #6cc043;
}
.ruler {
    height: 27px;
    padding: 2px 7px 0 6px;
    background: linear-gradient(#727172 20px, #7b7b7b 21px, #6c6c6c);
}
.numbers {
    display: flex;
    justify-content: space-between;
    height: 19px;
    padding: 0 3px 0 68px;
    border: 1px solid #444;
    border-radius: 10px;
    background: radial-gradient(circle at 7px 8px, #666 5px, transparent 6px), linear-gradient(#929092, #757375);
    line-height: 18px;
}
.numbers span {
    display: flex;
    justify-content: center;
    width: 28px;
}
.num {
    width: 100%;
    flex: 1;
    text-align: center;
    background: url("data:image/svg+xml,%3Csvg xmlns='http://www.w3.org/2000/svg' width='6' height='10'%3E%3Cpath d='M6 0V10L0 5Z' fill='%23777'/%3E%3C/svg%3E") no-repeat 11px 7px, url("data:image/svg+xml,%3Csvg xmlns='http://www.w3.org/2000/svg' width='6' height='10'%3E%3Cpath d='M0 0V10L6 5Z' fill='%23777'/%3E%3C/svg%3E") no-repeat right 11px top 7px, linear-gradient(#a5a5a5, #b4b4b4);
}
.round {
    border-radius: 14px;
}
.time-bar .round {
    margin-left: 1px;
}
.frames {
    width: 329px;
}
.current {
    width: 130px;
}
.player {
    width: 174px;
    margin-left: 18px;
}
.player .icon {
    width: 24px;
}
.sync {
    width: 161px;
}
.record {
    margin-left: 15px;
}
.rec {
    width: 14px;
    height: 14px;
    border: 1px solid #7a1a08;
    border-radius: 50%;
    background: #ef4a22;
}
.keying > .icon {
    width: 30px;
    height: 26px;
    padding: 3px 5px;
    background: linear-gradient(#959595, #a6a6a6);
}
.keying > input {
    width: 121px;
    border-left: none;
    background: linear-gradient(#959595, #a6a6a6);
}

/* outliner */
.right .bar {
    padding-left: 12px;
}
.right .menus {
    margin-right: 12px;
}
.filter {
    width: 130px;
}
.outliner {
    position: relative;
    height: 78px;
    display: flex;
    overflow: hidden;
}
.outliner ul {
    flex: 1;
    margin-top: -16px;
    list-style: none;
    background: linear-gradient(90deg, transparent 194px, #5c5c5c 195px, transparent 196px, transparent 223px, #5c5c5c 224px, transparent 225px, transparent 253px, #5c5c5c 254px, transparent 255px), repeating-linear-gradient(#6e6e6e 0 29px, #757575 29px 58px);
}
.outliner li {
    display: flex;
    align-items: center;
    gap: 4px;
    height: 29px;
    padding-left: 39px;
}
.outliner .root {
    width: 194px;
    padding-left: 3px;
    gap: 8px;
    background: #7c7f84;
}
.outliner .world {
    padding-left: 56px;
}
.outliner li .icon {
    width: 22px;
    height: 22px;
    margin-right: 4px;
}
.dot {
    width: 13px;
    height: 13px;
}
.outliner .scroll {
    position: absolute;
    top: 4px;
    right: 5px;
    height: 62px;
    padding-top: 7px;
}
.outliner .thumb {
    height: 26px;
}
.hscroll {
    height: 19px;
    margin: 5px 31px 0 6px;
    border: 1px solid #4a4a4a;
    border-radius: 9px;
    background: linear-gradient(#505050, #636363);
}
.hscroll .thumb {
    width: 68%;
    height: 17px;
    border-radius: 9px;
    background: linear-gradient(#9a9a9a, #7c7c7c);
    box-shadow: 0 0 0 1px #444;
}

/* properties editor */
.props-bar {
    border-top: 1px solid #000;
}
.tabs {
    margin-left: 3px;
}
.tabs button {
    display: flex;
    align-items: center;
    justify-content: center;
    flex-shrink: 0;
    width: 32px;
    background: linear-gradient(#454545, #565656);
}
.tabs button .icon {
    opacity: 0.75;
}
.tabs .active {
    width: 31px;
    background: #4a78bd;
}
.tabs .active .icon {
    width: 24px;
    height: 22px;
    opacity: 1;
}
.properties {
    display: flex;
    height: 776px;
    padding: 0 5px 0 6px;
    overflow: hidden;
}
.panels {
    flex: 1;
    margin-right: 8px;
}
.properties .scroll {
    margin: 8px 0 7px;
}
.properties .thumb {
    height: 71%;
}
.context {
    display: flex;
    align-items: center;
    height: 52px;
    padding-left: 7px;
}
.context .icon {
    width: 22px;
    height: 22px;
    margin-right: 11px;
}
.context .icon + .icon {
    margin-right: 2px;
}
.panel {
    padding: 3px 4px 11px;
    border-top: 1px solid #3a3a3a;
    box-shadow: inset 0 1px #858585;
}
.panel .title {
    height: 30px;
    margin-bottom: 14px;
    padding-left: 8px;
}
.shut {
    height: 35px;
    padding-bottom: 0;
}
.title label {
    display: flex;
    align-items: center;
}
.title label input {
    margin-right: 9px;
}
.cols {
    display: grid;
    grid-template-columns: minmax(0, 1fr) minmax(0, 1fr);
    gap: 11px;
}
.cols select {
    display: block;
    width: 100%;
    margin-bottom: 1px;
}
.action {
    display: flex;
    align-items: center;
    height: 28px;
    padding-left: 4px;
    border: 1px solid #3c3c3c;
    border-radius: 7px;
    background: linear-gradient(#a0a0a0, #888);
}
.action .icon {
    width: 22px;
    height: 22px;
}
.action span {
    flex: 1;
}
.display {
    display: flex;
    align-items: center;
    margin-top: 9px;
    padding-left: 8px;
}
.display select {
    width: 167px;
    margin-left: auto;
}
.presets {
    margin-bottom: 8px;
}
.presets select {
    flex: 1;
}
.cols h3 {
    padding-left: 7px;
    line-height: 29px;
}
.nums {
    border: 1px solid #3c3c3c;
    border-radius: 14px;
    overflow: hidden;
}
.nums input {
    display: block;
    width: 100%;
    height: 27px;
    text-align: center;
}
.nums input + input {
    height: 29px;
    border-top: 1px solid #3c3c3c;
}
.nums .percent {
    background: linear-gradient(90deg, #7c7c7c 54%, #adadad 54%);
}
.checks {
    display: flex;
    align-items: center;
    gap: 19px;
    height: 32px;
    padding-left: 5px;
}
.checks label {
    display: flex;
    align-items: center;
    gap: 8px;
}
.off {
    color: #4c4c4c;
}
input[type="checkbox"] {
    width: 20px;
    height: 20px;
    border: 1px solid #333;
    border-radius: 5px;
    background: linear-gradient(#484848, #585858);
}
input[type="checkbox"]:checked {
    background: url("data:image/svg+xml,%3Csvg xmlns='http://www.w3.org/2000/svg' viewBox='0 0 18 18'%3E%3Cpath d='M4 8L8 12L16 2' fill='none' stroke='%23eee' stroke-width='3'/%3E%3C/svg%3E") no-repeat, #585858;
}
input[type="checkbox"]:disabled {
    border-color: #555;
    background: #676767;
}
.samples button {
    flex: 1;
    color: #fff;
    background: #4b4b4b;
}
.samples .active {
    color: #111;
    background: #5480c4;
}
.size {
    margin-top: 4px;
}
.rest {
    height: 13px;
    overflow: hidden;
}
```

FILE: script.js
```js
const svgNS = 'http://www.w3.org/2000/svg';
const cells = 16;

// floor corners on screen: back left, front left, front right, back right
const [p0, p1, p2, p3] = [[522, 657], [401, 1403], [1704, 842], [1101, 573]];

// perspective mapping of the unit square to the floor
const dx1 = p1[0] - p2[0], dx2 = p3[0] - p2[0], sx = p0[0] - p1[0] + p2[0] - p3[0];
const dy1 = p1[1] - p2[1], dy2 = p3[1] - p2[1], sy = p0[1] - p1[1] + p2[1] - p3[1];
const den = dx1 * dy2 - dx2 * dy1;
const g = (sx * dy2 - dx2 * sy) / den;
const h = (dx1 * sy - sx * dy1) / den;

function project(u, v) {
    const w = g * u + h * v + 1;
    return [0, 1].map(i => ((p1[i] - p0[i] + g * p1[i]) * u + (p3[i] - p0[i] + h * p3[i]) * v + p0[i]) / w);
}

function addLine(a, b, color) {
    const line = document.createElementNS(svgNS, 'path');
    line.setAttribute('d', 'M' + a.join(' ') + 'L' + b.join(' '));
    if (color) line.setAttribute('stroke', color);
    document.getElementById('grid').appendChild(line);
}

for (let i = 0; i <= cells; i++) {
    const t = i / cells;
    // the middle line one way is the green axis, drawn in the page
    if (i !== cells / 2) addLine(project(t, 0), project(t, 1));
    addLine(project(0, t), project(1, t), i === cells / 2 ? '#433536' : '');
}

// one tick every ten frames
for (let i = 0; i < 33; i++) {
    document.getElementById('ticks').appendChild(document.createElement('i'));
}
```
